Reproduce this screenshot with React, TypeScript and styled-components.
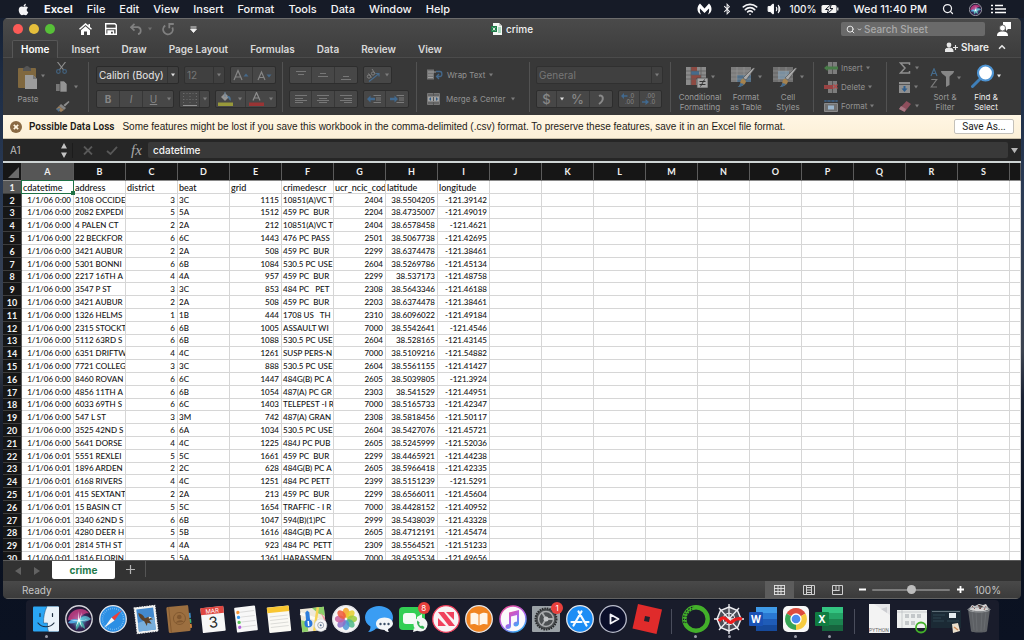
import React from "react";
import styled, { createGlobalStyle } from "styled-components";
import { FaApple, FaBluetoothB } from "react-icons/fa";
import { Search, Wifi, Volume2, ChevronUp, ChevronDown } from "lucide-react";

const ui = `Inter, Roboto, "Liberation Sans", sans-serif`;
const noticeFont = `Roboto, "Liberation Sans", sans-serif`;
const bodyFont = `"Liberation Sans", Arial, sans-serif`;
const cellFont = `Lato, "Open Sans", sans-serif`;

const GlobalStyle = createGlobalStyle`
  * { box-sizing: border-box; }
  body { margin: 0; background: #0d1526; font-family: ${ui}; }
  button, input, select { font-family: inherit; margin: 0; border: 0; padding: 0; background: none; color: inherit; outline: none; }
  svg { display: block; flex: none; }
`;

/* ---------- desktop and menu bar ---------- */

const Desktop = styled.div`
  height: 100vh;
  min-height: 400px;
  display: flex;
  flex-direction: column;
  overflow: hidden;
  background: linear-gradient(#141c2c 0%, #1c2c45 12%, #2b3b55 30%, #3c4350 55%, #1a2233 62%, #0a1120 85%, #0b1222 100%);
`;

const MenuBar = styled.header`
  flex: none;
  height: 18px;
  padding: 0 18px 0 17px;
  display: flex;
  align-items: center;
  justify-content: space-between;
  background: #161b27;
  color: #f4f4f6;
`;

const MenuGroup = styled.nav<{ $gap: number }>`
  display: flex;
  align-items: center;
  gap: ${(p) => p.$gap}px;
`;

const MenuItem = styled.button<{ $bold?: boolean }>`
  font-size: 11px;
  line-height: 16px;
  font-weight: ${(p) => (p.$bold ? 700 : 500)};
  white-space: nowrap;
`;

const MenuText = styled.span<{ $size: number }>`
  font-size: ${(p) => p.$size}px;
  font-weight: 500;
  white-space: nowrap;
`;

/* ---------- window ---------- */

const Window = styled.main`
  flex: 1;
  min-height: 0;
  margin: 0 3px 1px;
  display: flex;
  flex-direction: column;
  overflow: hidden;
  border-radius: 5px;
  background: #383838;
  color: #e4e4e4;
`;

const Chrome = styled.div`
  flex: none;
  border-top: 1px solid #6c6c6c;
  background: linear-gradient(#4a4a4a, #3c3c3c);
`;

const TitleRow = styled.div`
  height: 20px;
  padding: 0 10px;
  display: grid;
  grid-template-columns: 1fr auto 1fr;
  align-items: center;
`;

const QuickTools = styled.div`
  display: flex;
  align-items: center;
`;

const Light = styled.button<{ $color: string }>`
  width: 10px;
  height: 10px;
  margin-right: 6px;
  border-radius: 50%;
  background: ${(p) => p.$color};
`;

const QuickButton = styled.button<{ $space: number }>`
  margin-left: ${(p) => p.$space}px;
  display: flex;
`;

const DocTitle = styled.div`
  display: flex;
  align-items: center;
  gap: 4px;
  font-size: 10px;
  font-weight: 500;
  color: #f2f2f2;
`;

const TitleRight = styled.div`
  display: flex;
  align-items: center;
  justify-content: flex-end;
  gap: 12px;
`;

const SearchBox = styled.label`
  width: 144px;
  height: 14px;
  padding: 0 5px;
  display: flex;
  align-items: center;
  gap: 2px;
  border-radius: 2px;
  background: #6a6a6a;
  color: #f0f0f0;
  input {
    flex: 1;
    min-width: 0;
    font-size: 10px;
    line-height: 12px;
    font-weight: 500;
  }
  input::placeholder { color: #a9a9a9; opacity: 1; }
`;

const TabRow = styled.div`
  height: 19px;
  padding: 0 14px 0 9px;
  display: flex;
  align-items: flex-end;
  justify-content: space-between;
  border-bottom: 1px solid #4b4b4b;
`;

const Tabs = styled.div`
  display: flex;
  align-items: flex-end;
  margin-bottom: -1px;
`;

const RibbonTab = styled.button<{ $active?: boolean }>`
  height: 18px;
  padding: 0 ${(p) => (p.$active ? 8 : 10)}px 2px;
  margin-right: ${(p) => (p.$active ? 2 : 0)}px;
  border: 1px solid ${(p) => (p.$active ? "#575757" : "transparent")};
  border-bottom: 0;
  border-radius: 2px 2px 0 0;
  background: ${(p) => (p.$active ? "#3b3b3b" : "transparent")};
  color: ${(p) => (p.$active ? "#ffffff" : "#d9d9d9")};
  font-size: 10px;
  line-height: 14px;
  font-weight: 600;
  white-space: nowrap;
`;

const ShareArea = styled.div`
  height: 20px;
  display: flex;
  align-items: center;
  gap: 8px;
`;

const ShareButton = styled.button`
  display: flex;
  align-items: center;
  gap: 3px;
  font-size: 10px;
  font-weight: 600;
  color: #ececec;
`;

/* ---------- ribbon ---------- */

const Ribbon = styled.section`
  flex: none;
  height: 57px;
  padding: 4px 0 3px;
  display: flex;
  background: #383838;
  overflow: hidden;
`;

const Group = styled.div<{ $width?: number; $left?: number }>`
  flex: ${(p) => (p.$width ? "none" : "1")};
  width: ${(p) => (p.$width ? `${p.$width}px` : "auto")};
  padding-left: ${(p) => p.$left ?? 7}px;
  border-right: ${(p) => (p.$width ? "1px solid #525252" : "0")};
  display: flex;
`;

const Stack = styled.div<{ $gap?: number; $top?: number }>`
  display: flex;
  flex-direction: column;
  gap: ${(p) => p.$gap ?? 6}px;
  padding-top: ${(p) => p.$top ?? 4}px;
`;

const Row = styled.div`
  display: flex;
  align-items: center;
  gap: 5px;
`;

const PasteCaret = styled.button`
  width: 15px;
  height: 28px;
  display: flex;
  align-items: center;
`;

const ToolBox = styled.div`
  height: 18px;
  display: flex;
  border: 1px solid #2d2d2d;
  border-radius: 2px;
  background: #474747;
`;

const Tool = styled.button<{ $w: number; $line?: boolean }>`
  width: ${(p) => p.$w}px;
  display: flex;
  align-items: center;
  justify-content: center;
  border-right: ${(p) => (p.$line ? "1px solid #373737" : "0")};
  color: #868686;
  font-size: 10px;
`;

const SelectBox = styled.label<{ $w: number; $bright?: boolean }>`
  width: ${(p) => p.$w}px;
  height: 18px;
  display: flex;
  align-items: center;
  border: 1px solid ${(p) => (p.$bright ? "#2a2a2a" : "#303030")};
  border-radius: 2px;
  background: ${(p) => (p.$bright ? "#3f3f3f" : "#404040")};
  color: ${(p) => (p.$bright ? "#e8e8e8" : "#777777")};
  select {
    flex: 1;
    min-width: 0;
    height: 16px;
    padding-left: 2px;
    appearance: none;
    font-size: 10px;
    border-right: 1px solid #333333;
  }
  select option { color: #222222; }
  svg { margin: 0 3px; }
`;

const BigTool = styled.button<{ $w: number; $bright?: boolean; $single?: boolean }>`
  width: ${(p) => p.$w}px;
  padding-bottom: ${(p) => (p.$single ? 8 : 0)}px;
  display: flex;
  flex-direction: column;
  align-items: center;
  justify-content: flex-end;
  gap: 4px;
  color: ${(p) => (p.$bright ? "#f0f0f0" : "#9a9a9a")};
  font-size: 8px;
  line-height: 10px;
  white-space: nowrap;
`;

const IconCaret = styled.span<{ $gap?: number }>`
  display: flex;
  align-items: center;
  gap: ${(p) => p.$gap ?? 3}px;
`;

const LineTool = styled.button<{ $gap?: number; $h?: number }>`
  height: ${(p) => p.$h ?? 18}px;
  display: flex;
  align-items: center;
  gap: ${(p) => p.$gap ?? 3}px;
  color: #929292;
  font-size: 8px;
  white-space: nowrap;
`;

/* ---------- warning and formula bar ---------- */

const Warning = styled.section`
  flex: none;
  height: 24px;
  padding: 0 7px 0 7px;
  display: flex;
  align-items: center;
  border-bottom: 1px solid #c9c0aa;
  background: linear-gradient(#fff6e3, #fcf0d8);
  color: #1e1c18;
  font-family: ${noticeFont};
  font-size: 10px;
  white-space: nowrap;
`;

const WarningTitle = styled.strong`
  margin: 0 8px 0 7px;
  font-weight: 600;
`;

const WarningText = styled.span`
  flex: 1;
  font-family: ${bodyFont};
`;

const SaveButton = styled.button`
  width: 60px;
  height: 15px;
  border: 1px solid #c4c1ba;
  border-radius: 2px;
  background: #ffffff;
  color: #222222;
  font-size: 10px;
`;

const FormulaBar = styled.section`
  flex: none;
  height: 24px;
  padding-left: 7px;
  display: flex;
  align-items: center;
  border-bottom: 2px solid #ced4d4;
  background: #262626;
`;

const NameBox = styled.label`
  width: 63px;
  display: flex;
  align-items: center;
  gap: 2px;
  border-right: 1px solid #1c1c1c;
  input { width: 49px; font-size: 10px; line-height: 14px; color: #bdbdbd; }
`;

const FormulaIcons = styled.div`
  width: 75px;
  padding-left: 10px;
  display: flex;
  align-items: center;
  gap: 13px;
`;

const FxMark = styled.button`
  font: italic 15px "Liberation Serif", serif;
  line-height: 16px;
  color: #a8a8a8;
`;

const FormulaInput = styled.input`
  flex: 1;
  min-width: 0;
  height: 16px;
  padding-left: 5px !important;
  border-radius: 2px;
  background: #393939 !important;
  color: #f4f4f4;
  font-size: 10px;
  font-weight: 500;
`;

const ExpandButton = styled.button`
  width: 13px;
  display: flex;
  justify-content: center;
`;

/* ---------- sheet ---------- */

const SheetArea = styled.div`
  flex: 1;
  min-height: 0;
  overflow: hidden;
  background: #ffffff;
`;

const Sheet = styled.table`
  width: 100%;
  table-layout: fixed;
  border-collapse: separate;
  border-spacing: 0;
  font-family: ${cellFont};
  color: #111111;
  tbody tr { height: 13px; }
  tbody tr:nth-child(5n + 3) { height: 12px; }
`;

const Col = styled.col<{ $w: number }>`
  width: ${(p) => p.$w}px;
`;

const ColHead = styled.th<{ $active?: boolean }>`
  height: 18px;
  padding: 0;
  border-right: 1px solid #5b5b5b;
  border-bottom: 1px solid ${(p) => (p.$active ? "#1f7246" : "#8a8a8a")};
  background: ${(p) => (p.$active ? "#565656" : "#161616")};
  color: #f0f0f0;
  font-size: 9px;
  line-height: 12px;
  font-weight: 700;
`;

const RowHead = styled.th<{ $active?: boolean }>`
  padding: 0;
  border-right: 1px solid #5b5b5b;
  border-bottom: 1px solid #3d3d3d;
  background: ${(p) => (p.$active ? "#565656" : "#161616")};
  color: #f2f2f2;
  font-size: 9px;
  line-height: 11px;
  font-weight: 700;
`;

const Cell = styled.td<{ $right?: boolean; $title?: boolean; $selected?: boolean }>`
  position: relative;
  z-index: ${(p) => (p.$selected ? 1 : 0)};
  padding: 0 2px 0 1px;
  border-right: 1px solid #d6d6d6;
  border-bottom: 1px solid #d6d6d6;
  overflow: ${(p) => (p.$selected ? "visible" : "hidden")};
  text-align: ${(p) => (p.$right ? "right" : "left")};
  font-size: ${(p) => (p.$title ? 9 : 8)}px;
  line-height: 11px;
  font-weight: 500;
  white-space: pre;
`;

const SelectionFrame = styled.span`
  position: absolute;
  inset: -1px;
  border: 1px solid #1f7246;
  &::after {
    content: "";
    position: absolute;
    right: -2px;
    bottom: -2px;
    width: 4px;
    height: 4px;
    background: #1f7246;
  }
`;

/* ---------- tab strip and status bar ---------- */

const SheetTabs = styled.div`
  flex: none;
  height: 21px;
  display: flex;
  align-items: flex-start;
  border-top: 1px solid #5a5a5a;
  background: #323232;
`;

const SheetNav = styled.div`
  width: 49px;
  height: 20px;
  padding: 0 12px;
  display: flex;
  align-items: center;
  justify-content: space-between;
`;

const SheetTab = styled.button`
  width: 63px;
  height: 18px;
  border-radius: 0 0 2px 2px;
  background: #ffffff;
  color: #1f7a4a;
  font-size: 10px;
  font-weight: 700;
`;

const AddSheet = styled.button`
  width: 31px;
  height: 16px;
  display: flex;
  align-items: center;
  justify-content: center;
  border-right: 1px solid #555555;
`;

const StatusBar = styled.footer`
  flex: none;
  height: 18px;
  padding: 0 20px 0 19px;
  display: flex;
  align-items: center;
  justify-content: space-between;
  background: linear-gradient(#494949, #3b3b3b);
  border-bottom: 1px solid #626262;
  color: #c6c6c6;
  font-size: 10px;
`;

const StatusRight = styled.div`
  display: flex;
  align-items: center;
`;

const ViewButton = styled.button<{ $active?: boolean }>`
  width: 29px;
  height: 17px;
  display: flex;
  align-items: center;
  justify-content: center;
  background: ${(p) => (p.$active ? "#5c5c5c" : "transparent")};
`;

const ZoomButton = styled.button`
  width: 20px;
  display: flex;
  justify-content: center;
`;

const ZoomSlider = styled.input`
  width: 78px;
  height: 10px;
  appearance: none;
  &::-webkit-slider-runnable-track { height: 2px; background: #7c7c7c; border-radius: 1px; }
  &::-webkit-slider-thumb { appearance: none; width: 9px; height: 9px; margin-top: -4px; border-radius: 50%; background: #bdbdbd; }
`;

const ZoomText = styled.span`
  width: 31px;
  text-align: right;
`;

/* ---------- dock ---------- */

const Dock = styled.nav`
  flex: none;
  height: 40px;
  margin: 0 25px 0 26px;
  padding: 5px 6px 0;
  display: flex;
  justify-content: space-between;
  border-radius: 4px 4px 0 0;
  background: #191c2b;
`;

const DockItem = styled.button<{ $running?: boolean }>`
  position: relative;
  width: 28px;
  height: 35px;
  display: flex;
  flex-direction: column;
  align-items: center;
  gap: 2px;
  &::after {
    content: "";
    width: 3px;
    height: 3px;
    border-radius: 50%;
    background: ${(p) => (p.$running ? "#9a9ca8" : "transparent")};
  }
`;

const DockLine = styled.span`
  width: 1px;
  height: 25px;
  margin: 4px 5px 0;
  background: #4a4d5c;
`;

const Badge = styled.span`
  position: absolute;
  top: -3px;
  right: -3px;
  width: 12px;
  height: 12px;
  border-radius: 50%;
  background: #e8403c;
  color: #ffffff;
  font-size: 8px;
  line-height: 12px;
  text-align: center;
`;

/* ---------- drawings ---------- */

const Caret = ({ color = "#7c7c7c", s = 4 }: { color?: string; s?: number }) => (
  <svg width={s} height={s} viewBox="0 0 4 4"><path d="M0 .6h4L2 3.6z" fill={color} /></svg>
);

const Lines = ({ rows }: { rows: [number, number, number][] }) => (
  <svg width="14" height="12" viewBox="0 0 14 12">
    {rows.map(([x, y, w]) => <path key={y} d={`M${x} ${y + 0.5}h${w}`} stroke="#777777" />)}
  </svg>
);

const MalwareM = () => (
  <svg width="15" height="12" viewBox="0 0 15 12">
    <path d="M4 11.500C-.5 9.500-.5 3.500 3 .5l4.500 5L12 .5c3.500 3 3.500 9-1 11 1-2 1.400-3.800 1-6L7.500 10 3 5.500c-.4 2.200 0 4 1 6z" fill="#fff" />
  </svg>
);

const Battery = () => (
  <svg width="18" height="10" viewBox="0 0 18 10">
    <rect x=".5" y="1" width="15" height="8" rx="1.500" fill="#f4f4f4" />
    <path d="M16.800 3.500v3" stroke="#f4f4f4" strokeWidth="1.200" />
    <path d="M10.500 0L4.500 5.500H7.500L6 10l6-5.500H9z" fill="#f4f4f4" stroke="#161b27" strokeWidth="1" />
  </svg>
);

const MenuList = () => (
  <svg width="15" height="10" viewBox="0 0 15 10">
    <path d="M0 1.500h2M0 5h2M0 8.500h2M4 1.500h8M4 5h11M4 8.500h11" stroke="#fff" strokeWidth="1.500" />
  </svg>
);

const SiriArt = ({ size }: { size: number }) => (
  <svg width={size} height={size} viewBox="0 0 28 28">
    <defs>
      <radialGradient id={`siri${size}`} cx=".5" cy=".55">
        <stop offset="0" stopColor="#d8ffff" /><stop offset=".25" stopColor="#4a8fb5" />
        <stop offset=".6" stopColor="#3b2a5c" /><stop offset="1" stopColor="#1d1530" />
      </radialGradient>
    </defs>
    <circle cx="14" cy="14" r="13.200" fill={`url(#siri${size})`} stroke="#d4d4da" strokeWidth="1.400" />
    <path d="M3 15C4 4 18 0 24.500 8.500c-5-1-7.500 1.500-10.500 6.500z" fill="#e0438c" opacity=".7" />
    <path d="M14 15c4-5 8-5 12-1-3 3-8 3-12 1z" fill="#64d9e8" opacity=".7" />
    <path d="M14 15C9 13 6 14 3 18c4 1 8 0 11-3z" fill="#54b9f0" opacity=".85" />
    <path d="M14 15c-3 3-4 6-3 10 3-2 4-6 3-10zM14 15c0 4 2 7 6 9 0-4-2-7-6-9z" fill="#4fe0c0" opacity=".6" />
    <path d="M5 14.500c6 1.500 12 1.500 18-.5-6 2.600-12 2.600-18 .5zM13 6l1 9 3-8-2 8 2 8-3-7-3 6 2-7z" fill="#fff" />
  </svg>
);

const HomeIcon = () => (
  <svg width="13" height="12" viewBox="0 0 13 12">
    <path d="M6.500 0L0 5.800l1 1 5.500-4.900L12 6.800l1-1-2-1.800V1H9.500v1.600z" fill="#fff" />
    <path d="M2 7.200l4.500-4L11 7.200V12H8V8.500H5V12H2z" fill="#fff" />
  </svg>
);

const SaveIcon = () => (
  <svg width="12" height="12" viewBox="0 0 12 12">
    <path d="M.7.700h9.200l1.400 1.400v9.200H.7z" fill="none" stroke="#fff" strokeWidth="1.400" />
    <path d="M1 5.500h10M3 11.500V8h5.500v3.500" fill="none" stroke="#fff" strokeWidth="1.300" /><path d="M3 8h3v3.500H3z" fill="#fff" />
  </svg>
);

const UndoIcon = () => (
  <svg width="13" height="12" viewBox="0 0 13 12">
    <path d="M4.500.8L1 4.200l3.500 3.400M1.200 4.200H8a3.600 3.600 0 010 7.000" fill="none" stroke="#808080" strokeWidth="1.700" />
  </svg>
);

const RedoIcon = () => (
  <svg width="13" height="13" viewBox="0 0 13 13">
    <path d="M3.200 2.600A4.800 4.800 0 1010.300 4.500M7.300 5.200V1h4.500" fill="none" stroke="#808080" strokeWidth="1.800" />
  </svg>
);

const CustomizeIcon = () => (
  <svg width="7" height="7" viewBox="0 0 7 7"><path d="M.5 1h6M.5 3h6l-3 3.500z" stroke="#f0f0f0" strokeWidth=".9" fill="#f0f0f0" /></svg>
);

const FileIcon = () => (
  <svg width="11" height="12" viewBox="0 0 11 12">
    <path d="M2 0h6l3 3v9H2z" fill="#f5f7f5" /><path d="M8 0v3h3z" fill="#c6ccc8" />
    <rect y="3" width="6" height="6" fill="#1c7c47" />
    <path d="M1.800 4.500l2.400 3m0-3l-2.400 3" stroke="#fff" strokeWidth=".9" />
    <path d="M7 5h3M7 7h3M7 9h3" stroke="#5fc18c" />
  </svg>
);

const UserNote = () => (
  <svg width="14" height="14" viewBox="0 0 14 14">
    <path d="M6 0h8v7h-3L9 9V7H6z" fill="#fff" />
    <circle cx="5.500" cy="6" r="3" fill="#fff" stroke="#484848" strokeWidth=".8" />
    <path d="M0 14c0-3.500 2-4.500 5.500-4.500S11 10.500 11 14z" fill="#fff" />
  </svg>
);

const ShareIcon = () => (
  <svg width="13" height="10" viewBox="0 0 13 10">
    <circle cx="4" cy="3" r="2.400" fill="#e8e8e8" />
    <path d="M0 9.500C0 6.800 1.500 6 4 6s4 .8 4 3.500zM10.500 3v5M8 5.500h5" fill="#e8e8e8" stroke="#e8e8e8" strokeWidth="1.100" />
  </svg>
);

const PasteIcon = () => (
  <svg width="20" height="24" viewBox="0 0 20 24">
    <rect x="0" y="2" width="18" height="20" rx="1" fill="#80683f" />
    <path d="M5 2c2 0 2-2 4-2s2 2 4 2v3H5z" fill="#555" />
    <path d="M7 9h8l4 4v10H7z" fill="#9c9c9c" /><path d="M15 9v4h4z" fill="#777" />
  </svg>
);

const CutIcon = () => (
  <svg width="11" height="12" viewBox="0 0 11 12">
    <path d="M1.500 0l6.200 8M9.500 0L3.300 8" stroke="#8d8d8d" strokeWidth="1.200" />
    <circle cx="2.400" cy="9.500" r="1.800" fill="none" stroke="#42617d" strokeWidth="1.200" />
    <circle cx="8.600" cy="9.500" r="1.800" fill="none" stroke="#42617d" strokeWidth="1.200" />
  </svg>
);

const CopyIcon = () => (
  <svg width="11" height="12" viewBox="0 0 11 12">
    <path d="M0 3h5v7H0z" fill="#777" /><path d="M4 0h4l3 3v8H4z" fill="#949494" stroke="#383838" strokeWidth=".6" />
  </svg>
);

const BrushIcon = () => (
  <svg width="14" height="11" viewBox="0 0 14 11">
    <path d="M13.500 1L9 5.500 7.500 4 12.500 0z" fill="#8f8f8f" /><path d="M5 3l5 4-2 2-5-4z" fill="#858585" />
    <path d="M3 5l5 4-3 2-5-3z" fill="#9a7d5b" /><path d="M0 8l4-1-1 4z" fill="#4c6f8e" />
  </svg>
);

const FontSizeIcon = ({ up }: { up?: boolean }) => (
  <svg width="17" height="12" viewBox="0 0 17 12">
    <path d={up ? "M1 11L5 1.500 9 11M2.500 8h5" : "M2 11L5.500 3 9 11M3.200 8.500h4.600"} fill="none" stroke="#868686" strokeWidth="1.200" />
    <path d={up ? "M10.500 7.500h5l-2.500-3z" : "M10.500 5.500h5l-2.500 3z"} fill="#46698a" />
  </svg>
);

const BorderIcon = () => (
  <svg width="14" height="13" viewBox="0 0 14 13">
    <path d="M.5.5h13M.5 6.500h13M.5 0v12M7 0v12M13.500 0v12" stroke="#6a6a6a" strokeDasharray="1 2" />
    <path d="M0 12.500h14" stroke="#929292" />
  </svg>
);

const FillIcon = () => (
  <svg width="15" height="14" viewBox="0 0 15 14">
    <path d="M3 5l4-4 4 4-4 4z" fill="#949494" /><path d="M11 4c2 1 2 3 1.500 5C11 8 10.500 6 9 4z" fill="#4c7496" />
    <path d="M7 0v5" stroke="#6b8298" /><rect y="10.500" width="15" height="3.500" fill="#98993a" />
  </svg>
);

const FontColorIcon = () => (
  <svg width="15" height="14" viewBox="0 0 15 14">
    <path d="M4 8.500L7.500.5 11 8.500M5.200 6h4.600" fill="none" stroke="#8d8d8d" strokeWidth="1.200" />
    <rect y="10.500" width="15" height="3.500" fill="#983434" />
  </svg>
);

const OrientIcon = () => (
  <svg width="14" height="13" viewBox="0 0 14 13">
    <path d="M3 12.500L12.500 5M9.500 4.500h3.500v3" fill="none" stroke="#486b8c" strokeWidth="1.200" />
    <circle cx="3" cy="7.500" r="1.700" fill="none" stroke="#808080" /><path d="M2.500 4.500l3 4M6 0l3 4.500" stroke="#808080" />
    <circle cx="7" cy="4.500" r="1.600" fill="none" stroke="#808080" />
  </svg>
);

const IndentIcon = ({ right }: { right?: boolean }) => (
  <svg width="15" height="10" viewBox="0 0 15 10">
    <path d="M6.500 1.500h7.500M9 4h5M9 6h5M6.500 8.500h7.500" stroke="#7c7c7c" />
    <path d={right ? "M8 5L4.500 1.500v2.200H0v2.600h4.500v2.200z" : "M0 5l3.500-3.500v2.200H8v2.600H3.500v2.200z"} fill="#41698f" />
  </svg>
);

const WrapIcon = () => (
  <svg width="16" height="12" viewBox="0 0 16 12">
    <path d="M0 .5h7v10H0z" fill="#747474" /><path d="M1 3h8M1 6h5M1 8.500h5" stroke="#a0a0a0" />
    <path d="M9 2.500h4c2.500 0 2.500 5 0 5h-3M12 5L9.500 7.500 12 10" fill="none" stroke="#44688b" strokeWidth="1.300" />
  </svg>
);

const MergeIcon = () => (
  <svg width="13" height="12" viewBox="0 0 13 12">
    <path d="M.5.500h12v11H.5z" fill="#666" stroke="#777" /><path d="M1 3.500h11v5H1z" fill="#a3a3a3" />
    <path d="M2 6l2-2v4zM11 6L9 4v4z" fill="#2f5c88" /><path d="M6.500 4v4M6.500 0v3M6.500 9v3" stroke="#555" />
  </svg>
);

const DecimalIcon = ({ more }: { more?: boolean }) => (
  <svg width="17" height="14" viewBox="0 0 17 14">
    <path d={more ? "M0 4l3-3v2.200h3.500v1.600H3V7z" : "M7 10L3.500 7v2.200H0v1.600h3.500V13z"} fill="#41698f" />
    <text x={more ? 8 : 4} y="6" fontSize="6" fill="#8a8a8a" fontFamily={ui}>{more ? ".0" : ".00"}</text>
    <text x={more ? 4 : 8} y="12" fontSize="6" fill="#8a8a8a" fontFamily={ui}>{more ? ".00" : ".0"}</text>
  </svg>
);

const ConditionalIcon = () => (
  <svg width="22" height="22" viewBox="0 0 22 22">
    <path d="M0 1h20v18H0z" fill="#8b8b8b" /><path d="M5 1h6v4H5zM5 13h5v6H5z" fill="#8d4a42" /><path d="M5 5h8v4H5z" fill="#456b8c" /><path d="M5 9h10v4H5z" fill="#8d4a42" />
    <path d="M0 5h20M0 9h20M0 13h20M5 1v18M15 1v18" stroke="#5d5d5d" strokeWidth=".7" />
    <rect x="11" y="12" width="11" height="10" fill="#a5a5a5" stroke="#444" strokeWidth=".7" />
    <path d="M13.500 15.500h6M13.500 18.500h6M18.500 13.500l-4 7" stroke="#333" />
  </svg>
);

const TableBrush = ({ blue }: { blue?: boolean }) => (
  <svg width="25" height="22" viewBox="0 0 25 22">
    <path d="M0 1h20v15H0z" fill={blue ? "#6f6f6f" : "#7c7c7c"} />
    <path d={blue ? "M5 5h11v8H5z" : "M6 9h14v7H6z"} fill={blue ? "#7a8fa0" : "#526f88"} />
    <path d="M0 5h20M0 9h20M0 13h20M6 1v15M13 1v15" stroke="#a4a4a4" strokeWidth=".6" opacity=".7" />
    <path d="M24 2L15 14l-3-2L22 2z" fill="#a9a9a9" stroke="#4a4a4a" strokeWidth=".6" />
    <path d="M12 12.500l3 2.500c-.5 4-4 5.500-8 5.500 2-1 2-2 2.500-5 .5-1.800 1.200-2.500 2.500-3z" fill="#a5824e" />
    <path d="M9 17l4 1c-1.500 2.500-4 3-6.500 3C8.500 20 8.800 19 9 17z" fill="#436b8f" />
  </svg>
);

const CellsIcon = ({ kind }: { kind: "insert" | "delete" | "format" }) => (
  <svg width="14" height="12" viewBox="0 0 14 12">
    {kind === "format" ? (
      <>
        <path d="M.5 3.500h13v8H.5z" fill="#707070" stroke="#8a8a8a" /><path d="M4 5.500h6v4H4z" fill="#9bb5cc" />
        <path d="M1 1h12M1 0v2M5 0v2M9 0v2M13 0v2" stroke="#3e6790" />
      </>
    ) : (
      <>
        <path d="M4 0h9v12H4z" fill="#7d7d7d" /><path d="M8.500 0v12" stroke="#555" />
        <path d={kind === "insert" ? "M0 6l3.500-3v1.500H14v3H3.500V9z" : "M0 4h9v4H0z"} fill={kind === "insert" ? "#487c48" : "#9a4343"} />
        {kind === "delete" && <path d="M9.500 3.500l4 4m0-4l-4 4" stroke="#b34b4b" strokeWidth="1.300" />}
      </>
    )}
  </svg>
);

const SigmaIcon = () => (
  <svg width="12" height="12" viewBox="0 0 12 12">
    <path d="M10.500 3V1H1.500L6 6l-4.500 5h9V9" fill="none" stroke="#8f8f8f" strokeWidth="1.500" />
  </svg>
);

const FillDownIcon = () => (
  <svg width="11" height="11" viewBox="0 0 11 11">
    <path d="M0 0h11v11H0z" fill="#8f8f8f" /><path d="M0 2.500h11" stroke="#555" /><path d="M4.500 4h2v2.500h2L5.500 10l-3-3.500h2z" fill="#2f5f8e" />
  </svg>
);

const EraserIcon = () => (
  <svg width="12" height="11" viewBox="0 0 12 11">
    <path d="M7.500 0L12 3 6 10.500 0 8z" fill="#8e4e5c" /><path d="M0 8l2-3 5 3-1.500 3z" fill="#a87783" />
  </svg>
);

const SortIcon = () => (
  <svg width="24" height="20" viewBox="0 0 24 20">
    <path d="M1 8L4 .8 7 8M2 5.500h4" fill="none" stroke="#456b8c" strokeWidth="1.200" />
    <path d="M1.300 11.500h5.400L1.300 19h5.700" fill="none" stroke="#7a7a7a" strokeWidth="1.200" />
    <path d="M11 3h13c0 3-4 4-4.500 6v8l-3.500 2V9C15 7 11 6 11 3z" fill="#868686" />
  </svg>
);

const FindIcon = () => (
  <svg width="24" height="24" viewBox="0 0 24 24">
    <path d="M9 15l-7.500 7.500" stroke="#3f7fb8" strokeWidth="3" strokeLinecap="round" />
    <circle cx="14.500" cy="9" r="7.500" fill="#fdfeff" stroke="#4d93d2" strokeWidth="2.200" />
  </svg>
);

const Arrow = ({ left }: { left?: boolean }) => (
  <svg width="6" height="8" viewBox="0 0 6 8"><path d={left ? "M6 0v8L0 4z" : "M0 0v8l6-4z"} fill="#626262" /></svg>
);

/* ---------- dock drawings ---------- */

const Art = ({ children, tilt = 0 }: { children: React.ReactNode; tilt?: number }) => (
  <svg width="28" height="28" viewBox="0 0 28 28" overflow="visible">
    <g transform={tilt ? `rotate(${tilt} 14 14)` : undefined}>{children}</g>
  </svg>
);

const Disc = ({ fill, stroke = "#e6e6ea" }: { fill: string; stroke?: string }) => (
  <circle cx="14" cy="14" r="13.300" fill={fill} stroke={stroke} strokeWidth="1.300" />
);

const FinderArt = () => (
  <Art>
    <rect x="1" y="1.500" width="26" height="25" rx="1" fill="#2aa5f4" />
    <path d="M15 1.500h11a1 1 0 011 1v23a1 1 0 01-1 1h-9.500c-1-2.500-1-5.500-1-8.500h-4c0-6 1-11.500 3.500-16.500z" fill="#e9f2fa" />
    <path d="M8 8.500v3M20.500 8.500v3M6 18c4 5 12 5 16 0" fill="none" stroke="#1b2c40" strokeWidth="1.200" strokeLinecap="round" />
    <path d="M15 1.500c-2.500 5-3.500 10.500-3.500 16.500h4c0 3 0 6 1 8.500" fill="none" stroke="#1d466b" strokeWidth=".5" />
  </Art>
);

const SafariArt = () => (
  <Art>
    <Disc fill="#2c8fe4" />
    <circle cx="14" cy="14" r="10.500" fill="none" stroke="#a7d7f8" strokeWidth="1.500" strokeDasharray=".5 1.600" />
    <path d="M23 5l-7.500 10.500-3-3z" fill="#ee3e3a" /><path d="M5 23l7.500-10.500 3 3z" fill="#f5f5f5" />
  </Art>
);

const MailArt = () => (
  <Art tilt={-7}>
    <rect x="3.500" y="1.500" width="21" height="26" fill="#f4f4f2" stroke="#f4f4f2" strokeDasharray="1.500 1" />
    <rect x="5.500" y="3.500" width="17" height="22" fill="#4389cd" /><path d="M5.500 17l17-4v12.500h-17z" fill="#78aedb" />
    <path d="M7 7c3 1 5 3 6 6l4-1 4 3-4 .5 2 4-4-1.500-1 3-2-5c-3-2-5-5-5-9z" fill="#5c4128" /><path d="M17 12l3 1-3 1z" fill="#efe8d6" />
  </Art>
);

const ContactsArt = () => (
  <Art tilt={-6}>
    <path d="M24 9h2v5h-2z" fill="#3a92d0" /><path d="M24 15h2v4h-2z" fill="#3bb273" /><path d="M24 20h2v4h-2z" fill="#e0883a" />
    <rect x="2.500" y="1" width="22" height="26" rx="1.500" fill="#9c6f40" /><path d="M5 1v26" stroke="#83592f" />
    <circle cx="14.500" cy="13.500" r="6" fill="none" stroke="#80572f" strokeWidth=".9" /><circle cx="14.500" cy="12" r="2.300" fill="#80572f" /><path d="M10.500 17.500c1-3 7-3 8 0z" fill="#80572f" />
  </Art>
);

const CalendarArt = () => (
  <Art tilt={-6}>
    <rect x="2.500" y="2" width="23" height="25" rx="1" fill="#f7f7f7" /><path d="M2.500 2h23v7h-23z" fill="#df4640" />
    <text x="14" y="8" fontSize="6" fill="#fff" textAnchor="middle" fontFamily={ui}>MAR</text>
    <text x="14" y="22.500" fontSize="15" fill="#2b2b2b" textAnchor="middle" fontFamily={ui}>3</text>
  </Art>
);

const RemindersArt = () => (
  <Art tilt={-7}>
    <rect x="3.500" y="1.500" width="21" height="25" rx="1" fill="#f8f8f8" />
    <path d="M9 6.500h14M9 11.500h14M9 16.500h14M9 21.500h14" stroke="#dadada" />
    <circle cx="6.800" cy="6.500" r="1.700" fill="#f79433" /><circle cx="6.800" cy="11.500" r="1.700" fill="#389df5" />
    <circle cx="6.800" cy="16.500" r="1.700" fill="#56c456" /><circle cx="6.800" cy="21.500" r="1.700" fill="#b665d8" />
  </Art>
);

const NotesArt = () => (
  <Art tilt={-6}>
    <rect x="3" y="1.500" width="22" height="25.500" rx="1" fill="#faf9f4" /><path d="M3 1.500h22v5.500H3z" fill="#f9c631" />
    <path d="M5 11h18M5 14.500h18M5 18h18M5 21.500h18" stroke="#dcdcd8" />
  </Art>
);

const MapsArt = () => (
  <Art tilt={-6}>
    <rect x="2" y="3" width="24" height="23" fill="#efe9da" />
    <path d="M14 3h12v9l-6-3z" fill="#8ccf68" /><path d="M2 14l6 2v10H2z" fill="#8ccf68" /><path d="M2 7l24 12" stroke="#fdfbf4" strokeWidth="3" /><path d="M20 3l-6 23" stroke="#f7d354" strokeWidth="2.500" /><path d="M22 8l4 6v5z" fill="#ef8e9c" />
    <path d="M7 7l2-2 2 2v13H7z" fill="#2f7fdc" /><circle cx="9" cy="18" r="4" fill="#2a77dc" /><path d="M9 15.500v5" stroke="#fff" strokeWidth="1.500" />
    <circle cx="21" cy="21" r="6.200" fill="#f7f7f7" stroke="#c8ccd2" strokeWidth=".5" /><circle cx="21" cy="21" r="3" fill="none" stroke="#8d97a8" strokeWidth=".8" /><circle cx="21" cy="21" r="1" fill="#56708f" />
  </Art>
);

const PhotosArt = () => (
  <Art>
    <Disc fill="#f6f6f6" />
    {["#f5a623", "#e6cf2e", "#9bcb3c", "#4fb98a", "#4b97d6", "#8a6fc8", "#c9609f", "#ef5a3c"].map((c, i) => (
      <ellipse key={c} cx="14" cy="7.800" rx="3.400" ry="5" fill={c} opacity=".85" transform={`rotate(${i * 45} 14 14)`} />
    ))}
  </Art>
);

const MessagesArt = () => (
  <Art>
    <path d="M14 1C6 1 0 6 0 12.500c0 4 2 7 5.500 9C5.500 24 4.500 26 3 27c4 0 6.500-2 8-3.500 9 1 17-4 17-11C28 6 22 1 14 1z" fill="#3a9df3" />
    <path d="M19.500 12.500c-5 0-8.500 2.800-8.500 6.300s3.500 6.200 8.500 6.200c1 1.500 3 2 4.500 2-1-1-1-2-.8-3C25.500 23 28 21 28 18.800c0-3.500-3.500-6.300-8.500-6.300z" fill="#f4f6f8" />
    <circle cx="15.500" cy="19" r="1.200" fill="#3d5068" /><circle cx="19.500" cy="19" r="1.200" fill="#3d5068" /><circle cx="23.500" cy="19" r="1.200" fill="#3d5068" />
  </Art>
);

const FacetimeArt = () => (
  <Art>
    <rect x="0" y="2" width="26" height="23" rx="4" fill="#33cf54" /><rect x="4" y="8" width="13" height="11" rx="3" fill="#f4fbf5" /><path d="M18 12l5-3v8l-5-3z" fill="#f4fbf5" />
    <circle cx="21.500" cy="19.500" r="7" fill="#f4f6f4" /><path d="M15 23l-1 4 5-1.500z" fill="#f4f6f4" />
    <path d="M18.500 15.500c-1.500 2 .5 8 6 8.500l1-2-2.500-1.500-1 .8c-1-.6-1.800-1.500-2-2.500l.8-1z" fill="#36b455" />
  </Art>
);

const NewsArt = () => (
  <Art>
    <Disc fill="#f8f4f5" stroke="#f13f5c" />
    <path d="M6 7h6l11 14h-6z" fill="#f0415d" /><path d="M14 7h8v8zM6 13l8 8H6z" fill="#f0415d" />
  </Art>
);

const BooksArt = () => (
  <Art>
    <Disc fill="#f18522" />
    <path d="M13.500 9.500C11 7.500 8 7.500 5.500 8.500v11c3-1 5.500-.8 8 1zM14.500 9.500c2.500-2 5.500-2 8-1v11c-3-1-5.500-.8-8 1z" fill="#fff6ea" />
  </Art>
);

const MusicArt = () => (
  <Art>
    <defs><linearGradient id="note" x1="0" x2=".6" y1="0" y2="1"><stop offset="0" stopColor="#f64f8b" /><stop offset=".6" stopColor="#b060e8" /><stop offset="1" stopColor="#40a8f5" /></linearGradient></defs>
    <circle cx="14" cy="14" r="13" fill="#fbf9fb" stroke="url(#note)" strokeWidth="1.500" />
    <path d="M10 7.500l10-2.500v13.500c0 3.500-5.500 4-5.500 1s3-2.500 3.500-3V10l-6 1.500v9.500c0 3.500-5.500 4-5.500 1s3-2.500 3.500-3z" fill="url(#note)" />
  </Art>
);

const SettingsArt = () => (
  <Art>
    <rect x="0" y="1" width="28" height="26" rx="1" fill="#9ba1a6" />
    <circle cx="14" cy="14" r="10.500" fill="#4c4f52" stroke="#2a2c2e" strokeWidth="2" strokeDasharray="1.500 1" />
    <circle cx="14" cy="14" r="7.500" fill="none" stroke="#a9abad" strokeWidth="1.400" />
    <path d="M14 14h7.500M14 14l-4 6.500M14 14l-4-6.500" stroke="#a9abad" strokeWidth="1.800" /><circle cx="14" cy="14" r="2.500" fill="#c4c6c8" />
  </Art>
);

const AppStoreArt = () => (
  <Art>
    <Disc fill="#1c8df5" />
    <path d="M15.500 6.500l-8 14M12.500 6.500l8 14M5.500 17h10M18.500 17h4" stroke="#f6fbff" strokeWidth="2.200" strokeLinecap="round" />
  </Art>
);

const PlayArt = () => (
  <Art>
    <Disc fill="#0b0f2a" stroke="#b9bccb" />
    <path d="M11.500 9.500l8 4.500-8 4.500z" fill="none" stroke="#f4f4fa" strokeWidth="1.800" strokeLinejoin="round" />
  </Art>
);

const RobloxArt = () => (
  <Art>
    <path d="M6 -1l24 5.500L24.500 29 .5 23.500z" fill="#e02b2b" /><path d="M13 11l5 1-1 5-5-1z" fill="#24202c" />
  </Art>
);

const AnacondaArt = () => (
  <Art>
    <circle cx="14" cy="14" r="11.700" fill="none" stroke="#43b02a" strokeWidth="4.400" />
    <path d="M2 18C0 10 5 3 12 2" fill="none" stroke="#191c2b" strokeWidth="1.200" strokeDasharray="1.500 1.500" />
    <path d="M4 18C2.500 11 6 5.500 12 4" fill="none" stroke="#191c2b" strokeWidth="1.200" strokeDasharray="1 2" />
  </Art>
);

const SpyderArt = () => (
  <Art>
    <path d="M14 2l8.500 3.500L26 14l-3.500 8.500L14 26l-8.500-3.500L2 14l3.500-8.500z" fill="#4a4c56" stroke="#eeeef2" strokeWidth="1.500" />
    <path d="M14-1v30M-1 14h30M4 3l20 22M24 3L4 25" fill="none" stroke="#eeeef2" strokeWidth="1.300" />
    <path d="M14 8l4.500 1.700L20 14l-1.500 4.300L14 20l-4.500-1.700L8 14l1.500-4.300z" fill="none" stroke="#eeeef2" />
    <path d="M4 16c3-4 5-4 8-1s4 3 6 1 5-3 9-2" fill="none" stroke="#ee1c1c" strokeWidth="3.200" />
  </Art>
);

const OfficeArt = ({ letter, c }: { letter: string; c: string[] }) => (
  <Art>
    <path d="M7 2h21v6H7z" fill={c[0]} /><path d="M7 8h21v6H7z" fill={c[1]} /><path d="M7 14h21v6H7z" fill={c[2]} /><path d="M7 20h21v6H7z" fill={c[3]} />
    <rect x="0" y="7" width="14" height="14" rx="1" fill={c[4]} />
    <text x="7" y="17.500" fontSize="10" fontWeight="700" fill="#fff" textAnchor="middle" fontFamily={ui}>{letter}</text>
  </Art>
);

const ChromeArt = () => (
  <Art>
    <rect x="1" y="1" width="26" height="26" rx="5" fill="#f8f8f8" />
    <path d="M14 14L4.500 8.500A11 11 0 0123.500 8.500z" fill="#dd4b3e" />
    <path d="M14 14l9.500-5.500A11 11 0 0114 25z" fill="#f7cb3f" /><path d="M14 14v11A11 11 0 014.500 8.500z" fill="#36a455" />
    <circle cx="14" cy="14" r="5" fill="#4a8af0" stroke="#fff" strokeWidth="1.300" />
  </Art>
);

const PythonFileArt = () => (
  <Art>
    <path d="M4-1h21v29H4z" fill="#f3f3f3" /><path d="M9-1h16v11z" fill="#e6e6e8" /><path d="M16 4l6-2v6z" fill="#cdced2" />
    <text x="14" y="27" fontSize="5" fill="#666" textAnchor="middle" fontFamily={noticeFont}>PYTHON</text>
  </Art>
);

const ShotArt = ({ dark }: { dark?: boolean }) => (
  <Art>
    <rect x="-1" y="5" width="30" height="18" fill={dark ? "#1b2a35" : "#eef0ef"} />
    {dark ? (
      <>
        <path d="M0 6.500h28" stroke="#7f8f96" strokeWidth=".7" /><path d="M1 10h12M1 13h8M1 16h11M15 16h12" stroke="#38525c" strokeWidth=".7" /><path d="M17 8h7v5h-7z" fill="#e6ecef" />
        <path d="M20 19l6-1 2 8-7 2z" fill="#eadfcd" /><path d="M22 22l4 3" stroke="#ce8d5b" strokeWidth="1.500" />
      </>
    ) : (
      <>
        <path d="M-1 7h30M4 5v18" stroke="#b8bcc0" strokeWidth=".7" />
        <path d="M7 9h4v4H7zM13 9h4v4h-4zM19 9h4v4h-4zM7 16h4v4H7zM13 16h4v4h-4z" fill="#c4c8ca" />
        <circle cx="23" cy="22.500" r="5" fill="none" stroke="#43b02a" strokeWidth="1.800" />
      </>
    )}
  </Art>
);

const TrashArt = () => (
  <Art>
    <path d="M3 4h22l-3 22c0 2-16 2-16 0z" fill="#5d6064" /><path d="M7 6l2 19M11 6l1 20M17 6l-1 20M21 6l-2 19" stroke="#6c7074" strokeWidth=".8" />
    <path d="M4 4l3-4 3 1 4-2 4 1 3-1 3 5c-3 3-17 3-20 0z" fill="#d4d4d4" /><path d="M7 1l3 3M13 0l2 4 3-3M21 1l-2 4" stroke="#7e3d3a" strokeWidth=".8" />
    <ellipse cx="14" cy="4.500" rx="11" ry="2.500" fill="none" stroke="#9a9da0" />
  </Art>
);

/* ---------- data ---------- */

const columns = "ABCDEFGHIJKLMNOPQRS".split("");

const sheetRows: string[][] = [
  ["cdatetime", "address", "district", "beat", "grid", "crimedescr", "ucr_ncic_cod", "latitude", "longitude"],
  ["1/1/06 0:00", "3108 OCCIDE", "3", "3C", "1115", "10851(A)VC T", "2404", "38.5504205", "-121.39142"],
  ["1/1/06 0:00", "2082 EXPEDI", "5", "5A", "1512", "459 PC  BUR", "2204", "38.4735007", "-121.49019"],
  ["1/1/06 0:00", "4 PALEN CT", "2", "2A", "212", "10851(A)VC T", "2404", "38.6578458", "-121.4621"],
  ["1/1/06 0:00", "22 BECKFOR", "6", "6C", "1443", "476 PC PASS", "2501", "38.5067738", "-121.42695"],
  ["1/1/06 0:00", "3421 AUBUR", "2", "2A", "508", "459 PC  BUR", "2299", "38.6374478", "-121.38461"],
  ["1/1/06 0:00", "5301 BONNI", "6", "6B", "1084", "530.5 PC USE", "2604", "38.5269786", "-121.45134"],
  ["1/1/06 0:00", "2217 16TH A", "4", "4A", "957", "459 PC  BUR", "2299", "38.537173", "-121.48758"],
  ["1/1/06 0:00", "3547 P ST", "3", "3C", "853", "484 PC   PET", "2308", "38.5643346", "-121.46188"],
  ["1/1/06 0:00", "3421 AUBUR", "2", "2A", "508", "459 PC  BUR", "2203", "38.6374478", "-121.38461"],
  ["1/1/06 0:00", "1326 HELMS", "1", "1B", "444", "1708 US   TH", "2310", "38.6096022", "-121.49184"],
  ["1/1/06 0:00", "2315 STOCKT", "6", "6B", "1005", "ASSAULT WI", "7000", "38.5542641", "-121.4546"],
  ["1/1/06 0:00", "5112 63RD S", "6", "6B", "1088", "530.5 PC USE", "2604", "38.528165", "-121.43145"],
  ["1/1/06 0:00", "6351 DRIFTW", "4", "4C", "1261", "SUSP PERS-N", "7000", "38.5109216", "-121.54882"],
  ["1/1/06 0:00", "7721 COLLEG", "3", "3C", "888", "530.5 PC USE", "2604", "38.5561155", "-121.41427"],
  ["1/1/06 0:00", "8460 ROVAN", "6", "6C", "1447", "484G(B) PC A", "2605", "38.5039805", "-121.3924"],
  ["1/1/06 0:00", "4856 11TH A", "6", "6B", "1054", "487(A) PC GR", "2303", "38.541529", "-121.44951"],
  ["1/1/06 0:00", "6033 69TH S", "6", "6C", "1403", "TELEPEST -I R", "7000", "38.5165733", "-121.42347"],
  ["1/1/06 0:00", "547 L ST", "3", "3M", "742", "487(A) GRAN", "2308", "38.5818456", "-121.50117"],
  ["1/1/06 0:00", "3525 42ND S", "6", "6A", "1034", "530.5 PC USE", "2604", "38.5427076", "-121.45721"],
  ["1/1/06 0:00", "5641 DORSE", "4", "4C", "1225", "484J PC PUB", "2605", "38.5245999", "-121.52036"],
  ["1/1/06 0:01", "5551 REXLEI", "5", "5C", "1661", "459 PC  BUR", "2299", "38.4465921", "-121.44238"],
  ["1/1/06 0:01", "1896 ARDEN", "2", "2C", "628", "484G(B) PC A", "2605", "38.5966418", "-121.42335"],
  ["1/1/06 0:01", "6168 RIVERS", "4", "4C", "1251", "484 PC PETT", "2399", "38.5151239", "-121.5291"],
  ["1/1/06 0:01", "415 SEXTANT", "2", "2A", "213", "459 PC  BUR", "2299", "38.6566011", "-121.45604"],
  ["1/1/06 0:01", "15 BASIN CT", "5", "5C", "1654", "TRAFFIC - I R", "7000", "38.4428152", "-121.40952"],
  ["1/1/06 0:01", "3340 62ND S", "6", "6B", "1047", "594(B)(1)PC", "2999", "38.5438039", "-121.43328"],
  ["1/1/06 0:01", "4280 DEER H", "5", "5B", "1616", "484G(B) PC A", "2605", "38.4712191", "-121.45474"],
  ["1/1/06 0:01", "2814 5TH ST", "4", "4A", "923", "484 PC  PETT", "2309", "38.5564521", "-121.51233"],
  ["1/1/06 0:01", "1816 FLORIN", "5", "5A", "1361", "HARASSMEN", "7000", "38.4953534", "-121.49656"],
];

const rightColumns = [0, 2, 4, 6, 7, 8];

const menus = ["File", "Edit", "View", "Insert", "Format", "Tools", "Data", "Window", "Help"];
const ribbonTabs = ["Home", "Insert", "Draw", "Page Layout", "Formulas", "Data", "Review", "View"];

type DockEntry = { name: string; art: React.ReactNode; running?: boolean; badge?: string } | null;

const dock: DockEntry[] = [
  { name: "Finder", art: <FinderArt />, running: true },
  { name: "Siri", art: <SiriArt size={28} /> },
  { name: "Safari", art: <SafariArt /> },
  { name: "Mail", art: <MailArt /> },
  { name: "Contacts", art: <ContactsArt /> },
  { name: "Calendar", art: <CalendarArt /> },
  { name: "Reminders", art: <RemindersArt /> },
  { name: "Notes", art: <NotesArt /> },
  { name: "Maps", art: <MapsArt /> },
  { name: "Photos", art: <PhotosArt /> },
  { name: "Messages", art: <MessagesArt /> },
  { name: "FaceTime", art: <FacetimeArt />, badge: "8" },
  { name: "News", art: <NewsArt /> },
  { name: "Books", art: <BooksArt /> },
  { name: "Music", art: <MusicArt /> },
  { name: "System Preferences", art: <SettingsArt />, badge: "1" },
  { name: "App Store", art: <AppStoreArt /> },
  { name: "Player", art: <PlayArt /> },
  { name: "Roblox", art: <RobloxArt /> },
  null,
  { name: "Anaconda", art: <AnacondaArt />, running: true },
  { name: "Spyder", art: <SpyderArt />, running: true },
  { name: "Word", art: <OfficeArt letter="W" c={["#3f9ae8", "#2a78d2", "#1f5cb8", "#164a9c", "#1a52b5"]} /> },
  { name: "Chrome", art: <ChromeArt />, running: true },
  { name: "Excel", art: <OfficeArt letter="X" c={["#33c481", "#24a366", "#1c8450", "#17643e", "#107c41"]} />, running: true },
  null,
  { name: "Python file", art: <PythonFileArt /> },
  { name: "Navigator window", art: <ShotArt /> },
  { name: "Editor window", art: <ShotArt dark /> },
  { name: "Trash", art: <TrashArt /> },
];

/* ---------- sections ---------- */

const RibbonContent = () => (
  <Ribbon>
    <Group $width={86} $left={12}>
      <BigTool $w={26} $single><PasteIcon />Paste</BigTool>
      <PasteCaret aria-label="Paste options"><Caret /></PasteCaret>
      <Stack $gap={7} $top={0}>
        <LineTool $h={12} aria-label="Cut"><CutIcon /></LineTool>
        <LineTool $h={12} $gap={7} aria-label="Copy"><CopyIcon /><Caret /></LineTool>
        <LineTool $h={12} aria-label="Format painter"><BrushIcon /></LineTool>
      </Stack>
    </Group>
    <Group $width={194}>
      <Stack>
        <Row>
          <SelectBox $w={83} $bright>
            <select aria-label="Font"><option>Calibri (Body)</option></select><Caret color="#e0e0e0" />
          </SelectBox>
          <SelectBox $w={41}>
            <select aria-label="Font size"><option>12</option></select><Caret />
          </SelectBox>
          <ToolBox>
            <Tool $w={22} $line aria-label="Increase font size"><FontSizeIcon up /></Tool>
            <Tool $w={22} aria-label="Decrease font size"><FontSizeIcon /></Tool>
          </ToolBox>
        </Row>
        <Row>
          <ToolBox>
            <Tool $w={23} $line><b>B</b></Tool><Tool $w={23} $line><i>I</i></Tool><Tool $w={21}><u>U</u></Tool>
            <Tool $w={9} aria-label="Underline style"><Caret /></Tool>
          </ToolBox>
          <ToolBox>
            <Tool $w={20} $line aria-label="Borders"><BorderIcon /></Tool><Tool $w={9} aria-label="Border style"><Caret /></Tool>
          </ToolBox>
          <ToolBox>
            <Tool $w={18} aria-label="Fill color"><FillIcon /></Tool><Tool $w={12} $line aria-label="Fill colors"><Caret /></Tool>
            <Tool $w={20} aria-label="Font color"><FontColorIcon /></Tool><Tool $w={10} aria-label="Font colors"><Caret /></Tool>
          </ToolBox>
        </Row>
      </Stack>
    </Group>
    <Group $width={134} $left={6}>
      <Stack>
        <Row>
          <ToolBox>
            <Tool $w={22} $line aria-label="Top align"><Lines rows={[[2, 2, 10], [4, 5, 6]]} /></Tool>
            <Tool $w={23} $line aria-label="Middle align"><Lines rows={[[4, 4, 6], [2, 7, 10]]} /></Tool>
            <Tool $w={22} aria-label="Bottom align"><Lines rows={[[4, 7, 6], [2, 10, 10]]} /></Tool>
          </ToolBox>
          <ToolBox>
            <Tool $w={18} aria-label="Orientation"><OrientIcon /></Tool><Tool $w={9} aria-label="Orientation options"><Caret /></Tool>
          </ToolBox>
        </Row>
        <Row>
          <ToolBox>
            <Tool $w={22} $line aria-label="Align left"><Lines rows={[[1, 2, 12], [1, 5, 8], [1, 7, 12], [1, 9, 8]]} /></Tool>
            <Tool $w={23} $line aria-label="Center"><Lines rows={[[1, 2, 12], [3, 5, 8], [1, 7, 12], [3, 9, 8]]} /></Tool>
            <Tool $w={22} aria-label="Align right"><Lines rows={[[1, 2, 12], [5, 5, 8], [1, 7, 12], [5, 9, 8]]} /></Tool>
          </ToolBox>
          <ToolBox>
            <Tool $w={22} $line aria-label="Decrease indent"><IndentIcon /></Tool>
            <Tool $w={22} aria-label="Increase indent"><IndentIcon right /></Tool>
          </ToolBox>
        </Row>
      </Stack>
    </Group>
    <Group $width={113} $left={10}>
      <Stack>
        <LineTool $gap={4}><WrapIcon />Wrap Text<Caret /></LineTool>
        <LineTool $gap={6}><MergeIcon />Merge &amp; Center<Caret /></LineTool>
      </Stack>
    </Group>
    <Group $width={141} $left={6}>
      <Stack>
        <SelectBox $w={127}>
          <select aria-label="Number format"><option>General</option></select><Caret />
        </SelectBox>
        <Row>
          <ToolBox>
            <Tool $w={20} $line><MenuText $size={13}>$</MenuText></Tool><Tool $w={9} aria-label="Currency"><Caret color="#e0e0e0" /></Tool>
            <Tool $w={24} $line><MenuText $size={13}>%</MenuText></Tool>
            <Tool $w={22} aria-label="Comma style">
              <svg width="7" height="11" viewBox="0 0 7 11"><path d="M1 2c4-2 6 4 0 8" fill="none" stroke="#8a8a8a" strokeWidth="2" /></svg>
            </Tool>
          </ToolBox>
          <ToolBox>
            <Tool $w={21} $line aria-label="Increase decimal"><DecimalIcon more /></Tool>
            <Tool $w={21} aria-label="Decrease decimal"><DecimalIcon /></Tool>
          </ToolBox>
        </Row>
      </Stack>
    </Group>
    <Group $width={143} $left={4}>
      <BigTool $w={50}><IconCaret><ConditionalIcon /><Caret /></IconCaret><span>Conditional<br />Formatting</span></BigTool>
      <BigTool $w={42}><IconCaret $gap={2}><TableBrush /><Caret /></IconCaret><span>Format<br />as Table</span></BigTool>
      <BigTool $w={42}><IconCaret $gap={2}><TableBrush blue /><Caret /></IconCaret><span>Cell<br />Styles</span></BigTool>
    </Group>
    <Group $width={73} $left={10}>
      <Stack $gap={7} $top={0}>
        <LineTool $h={12}><CellsIcon kind="insert" />Insert<Caret /></LineTool>
        <LineTool $h={12}><CellsIcon kind="delete" />Delete<Caret /></LineTool>
        <LineTool $h={12}><CellsIcon kind="format" />Format<Caret /></LineTool>
      </Stack>
    </Group>
    <Group $left={12}>
      <Stack $gap={7} $top={0}>
        <LineTool $h={12} $gap={4} aria-label="AutoSum"><SigmaIcon /><Caret /></LineTool>
        <LineTool $h={12} $gap={4} aria-label="Fill"><FillDownIcon /><Caret /></LineTool>
        <LineTool $h={12} $gap={4} aria-label="Clear"><EraserIcon /><Caret /></LineTool>
      </Stack>
      <BigTool $w={52}><IconCaret><SortIcon /><Caret /></IconCaret><span>Sort &amp;<br />Filter</span></BigTool>
      <BigTool $w={30} $bright><IconCaret $gap={2}><FindIcon /><Caret color="#e8e8e8" /></IconCaret><span>Find &amp;<br />Select</span></BigTool>
    </Group>
  </Ribbon>
);

const SheetTable = () => (
  <SheetArea>
    <Sheet>
      <colgroup>
        <Col $w={19} />
        {columns.map((c) => <Col key={c} $w={52} />)}
        <col />
      </colgroup>
      <thead>
        <tr>
          <ColHead aria-label="Select all">
            <svg width="18" height="17" viewBox="0 0 18 17"><path d="M16 4v11H5z" fill="#6b6b6b" /></svg>
          </ColHead>
          {columns.map((c, i) => <ColHead key={c} $active={i === 0} scope="col">{c}</ColHead>)}
          <ColHead />
        </tr>
      </thead>
      <tbody>
        {sheetRows.map((row, r) => (
          <tr key={r}>
            <RowHead scope="row" $active={r === 0}>{r + 1}</RowHead>
            {columns.map((c, i) => (
              <Cell key={c} $title={r === 0} $right={r > 0 && rightColumns.includes(i)} $selected={r === 0 && i === 0}>
                {row[i] ?? ""}
                {r === 0 && i === 0 && <SelectionFrame />}
              </Cell>
            ))}
            <Cell />
          </tr>
        ))}
      </tbody>
    </Sheet>
  </SheetArea>
);

export default function App() {
  return (
    <Desktop>
      <GlobalStyle />
      <MenuBar>
        <MenuGroup $gap={14}>
          <FaApple size={13} />
          <MenuItem $bold>Excel</MenuItem>
          {menus.map((m) => <MenuItem key={m}>{m}</MenuItem>)}
        </MenuGroup>
        <MenuGroup $gap={15}>
          <MenuGroup $gap={9}>
            <MalwareM />
            <FaBluetoothB size={12} />
            <Wifi size={16} strokeWidth={2.5} />
            <Volume2 size={14} fill="#fff" />
            <MenuGroup $gap={4}>
              <MenuText $size={10}>100%</MenuText>
              <Battery />
            </MenuGroup>
          </MenuGroup>
          <MenuText $size={11}>Wed 11:40 PM</MenuText>
          <Search size={12} strokeWidth={2.5} />
          <MenuGroup $gap={9}>
            <SiriArt size={13} />
            <MenuList />
          </MenuGroup>
        </MenuGroup>
      </MenuBar>

      <Window>
        <Chrome>
          <TitleRow>
            <QuickTools>
              <Light $color="#fc5b57" aria-label="Close" />
              <Light $color="#e5bf3c" aria-label="Minimize" />
              <Light $color="#57c038" aria-label="Zoom" />
              <QuickButton $space={18} aria-label="Home"><HomeIcon /></QuickButton>
              <QuickButton $space={13} aria-label="Save"><SaveIcon /></QuickButton>
              <QuickButton $space={13} aria-label="Undo"><UndoIcon /></QuickButton>
              <QuickButton $space={5} aria-label="Undo list"><Caret color="#6f6f6f" /></QuickButton>
              <QuickButton $space={10} aria-label="Redo"><RedoIcon /></QuickButton>
              <QuickButton $space={15} aria-label="Customize"><CustomizeIcon /></QuickButton>
            </QuickTools>
            <DocTitle><FileIcon />crime</DocTitle>
            <TitleRight>
              <SearchBox>
                <Search size={9} strokeWidth={2.5} /><ChevronDown size={5} strokeWidth={4} />
                <input aria-label="Search Sheet" placeholder="Search Sheet" />
              </SearchBox>
              <QuickButton $space={0} aria-label="Account"><UserNote /></QuickButton>
            </TitleRight>
          </TitleRow>
          <TabRow>
            <Tabs>
              {ribbonTabs.map((t, i) => <RibbonTab key={t} $active={i === 0}>{t}</RibbonTab>)}
            </Tabs>
            <ShareArea>
              <ShareButton><ShareIcon />Share</ShareButton>
              <ChevronUp size={10} strokeWidth={4} />
            </ShareArea>
          </TabRow>
        </Chrome>

        <RibbonContent />

        <Warning>
          <svg width="12" height="12" viewBox="0 0 11 11">
            <circle cx="5.500" cy="5.500" r="5.500" fill="#8a6a44" /><path d="M3.500 3.500l4 4m0-4l-4 4" stroke="#fff6e3" strokeWidth="1.500" />
          </svg>
          <WarningTitle>Possible Data Loss</WarningTitle>
          <WarningText>
            Some features might be lost if you save this workbook in the comma-delimited (.csv) format. To preserve these features, save it in an Excel file format.
          </WarningText>
          <SaveButton>Save As...</SaveButton>
        </Warning>

        <FormulaBar>
          <NameBox>
            <input aria-label="Name box" defaultValue="A1" />
            <svg width="6" height="15" viewBox="0 0 6 15"><path d="M3 0l3 5.500H0zM3 15l3-5.500H0z" fill="#c4c4c4" /></svg>
          </NameBox>
          <FormulaIcons>
            <svg width="10" height="9" viewBox="0 0 10 9"><path d="M1 .5l8 8m0-8l-8 8" stroke="#585858" strokeWidth="1.800" /></svg>
            <svg width="12" height="9" viewBox="0 0 12 9"><path d="M1 5l3.500 3L11 .8" fill="none" stroke="#585858" strokeWidth="1.800" /></svg>
            <FxMark>fx</FxMark>
          </FormulaIcons>
          <FormulaInput aria-label="Formula" defaultValue="cdatetime" />
          <ExpandButton aria-label="Expand formula bar"><Caret color="#b5b5b5" s={7} /></ExpandButton>
        </FormulaBar>

        <SheetTable />

        <SheetTabs>
          <SheetNav><Arrow left /><Arrow /></SheetNav>
          <SheetTab>crime</SheetTab>
          <AddSheet aria-label="Add sheet">
            <svg width="9" height="9" viewBox="0 0 9 9"><path d="M4.500 0v9M0 4.500h9" stroke="#b5b5b5" strokeWidth="1.200" /></svg>
          </AddSheet>
        </SheetTabs>

        <StatusBar>
          <span>Ready</span>
          <StatusRight>
            <ViewButton $active aria-label="Normal view">
              <svg width="11" height="10" viewBox="0 0 11 10"><path d="M0 .5h11M0 3.500h11M0 6.500h11M0 9.500h11M.5 0v10M4 0v10M7 0v10M10.500 0v10" stroke="#e4e4e4" strokeWidth=".9" /></svg>
            </ViewButton>
            <ViewButton aria-label="Page layout view">
              <svg width="12" height="10" viewBox="0 0 12 10"><path d="M.5.500h11v9H.5zM3.500 0v10M8.500 0v10M3.500 2.500h5M3.500 5h5M3.500 7.500h5" fill="none" stroke="#d0d0d0" /></svg>
            </ViewButton>
            <ViewButton aria-label="Page break view">
              <svg width="11" height="10" viewBox="0 0 11 10"><path d="M.5.500h10v9H.5zM4 0v5.500M7 0v5.500M0 5.500h7.500" fill="none" stroke="#d0d0d0" /></svg>
            </ViewButton>
            <ZoomButton aria-label="Zoom out"><svg width="7" height="7" viewBox="0 0 7 7"><path d="M0 3.500h7" stroke="#fff" strokeWidth="1.800" /></svg></ZoomButton>
            <ZoomSlider type="range" aria-label="Zoom" defaultValue={50} />
            <ZoomButton aria-label="Zoom in"><svg width="7" height="7" viewBox="0 0 7 7"><path d="M0 3.500h7M3.500 0v7" stroke="#fff" strokeWidth="1.800" /></svg></ZoomButton>
            <ZoomText>100%</ZoomText>
          </StatusRight>
        </StatusBar>
      </Window>

      <Dock>
        {dock.map((d, i) =>
          d ? (
            <DockItem key={i} $running={d.running} aria-label={d.name}>
              {d.art}
              {d.badge && <Badge>{d.badge}</Badge>}
            </DockItem>
          ) : (
            <DockLine key={i} />
          )
        )}
      </Dock>
    </Desktop>
  );
}
